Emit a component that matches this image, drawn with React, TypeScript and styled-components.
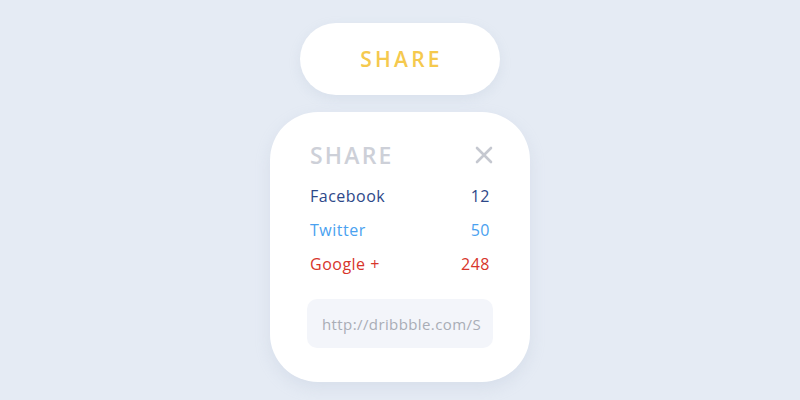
import React from "react";
import styled, { createGlobalStyle } from "styled-components";

const GlobalStyle = createGlobalStyle`
  html, body {
    margin: 0;
    padding: 0;
    background: #e5ebf4;
    font-family: "Open Sans", "Liberation Sans", sans-serif;
  }
`;

const Page = styled.div`
  display: flex;
  flex-direction: column;
  align-items: center;
  height: 400px;
  padding-top: 23px;
  box-sizing: border-box;
  gap: 17px;
`;

const ShareButton = styled.button`
  width: 200px;
  height: 72px;
  border: none;
  border-radius: 36px;
  background: #ffffff;
  box-shadow: 0 4px 12px rgba(160, 175, 200, 0.18);
  color: #f5c94e;
  font-family: inherit;
  font-size: 21px;
  font-weight: 600;
  letter-spacing: 3.2px;
  text-indent: 3px;
  padding: 0;
  cursor: pointer;
`;

const Card = styled.div`
  width: 260px;
  height: 270px;
  box-sizing: border-box;
  background: #ffffff;
  border-radius: 48px;
  box-shadow: 0 6px 16px rgba(160, 175, 200, 0.2);
  padding: 30px 37px 0 37px;
  display: flex;
  flex-direction: column;
`;

const Header = styled.div`
  display: flex;
  justify-content: space-between;
  align-items: center;
  height: 26px;
  padding: 0 0 0 3px;
`;

const Title = styled.div`
  color: #cdd0d8;
  font-size: 23px;
  font-weight: 600;
  letter-spacing: 2.2px;
`;

const CloseButton = styled.button`
  border: none;
  background: none;
  padding: 0;
  width: 18px;
  height: 18px;
  display: flex;
  cursor: pointer;
`;

const List = styled.div`
  display: flex;
  flex-direction: column;
  gap: 12px;
  margin-top: 17px;
  padding: 0 3px;
`;

const Row = styled.div<{ $color: string }>`
  display: flex;
  justify-content: space-between;
  align-items: center;
  height: 22px;
  font-size: 16px;
  font-weight: 500;
  letter-spacing: 0.5px;
  color: ${(p) => p.$color};
`;

const LinkBox = styled.div`
  margin-top: 24px;
  height: 49px;
  border-radius: 10px;
  background: #f3f5fa;
  display: flex;
  align-items: center;
  padding-left: 15px;
  overflow: hidden;
  white-space: nowrap;
  color: #a9adb6;
  font-size: 15px;
  font-weight: 500;
  letter-spacing: 0.4px;
`;

const rows = [
  { name: "Facebook", count: 12, color: "#2d4889" },
  { name: "Twitter", count: 50, color: "#4aa1f0" },
  { name: "Google +", count: 248, color: "#d7352b" },
];

export default function App() {
  return (
    <>
      <GlobalStyle />
      <Page>
        <ShareButton>SHARE</ShareButton>
        <Card>
          <Header>
            <Title>SHARE</Title>
            <CloseButton aria-label="Close">
              <svg width="18" height="18" viewBox="0 0 18 18">
                <path
                  d="M2 2 L16 16 M16 2 L2 16"
                  stroke="#c5c8d0"
                  strokeWidth="2.6"
                  strokeLinecap="round"
                />
              </svg>
            </CloseButton>
          </Header>
          <List>
            {rows.map((r) => (
              <Row key={r.name} $color={r.color}>
                <span>{r.name}</span>
                <span>{r.count}</span>
              </Row>
            ))}
          </List>
          <LinkBox>http://dribbble.com/S</LinkBox>
        </Card>
      </Page>
    </>
  );
}
